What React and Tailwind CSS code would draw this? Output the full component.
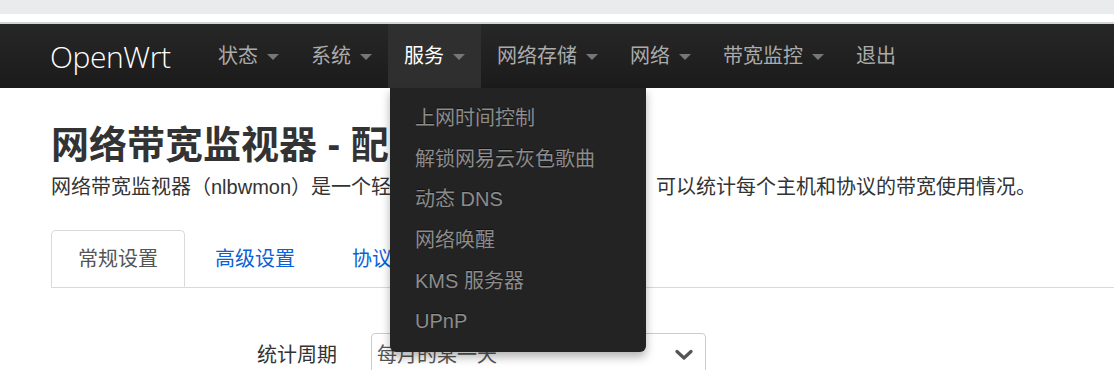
import React from "react";

const navItems = [
	{ label: "状态", caret: true },
	{ label: "系统", caret: true },
	{ label: "服务", caret: true, active: true },
	{ label: "网络存储", caret: true },
	{ label: "网络", caret: true },
	{ label: "带宽监控", caret: true },
	{ label: "退出", caret: false },
];

const serviceMenu = [
	"上网时间控制",
	"解锁网易云灰色歌曲",
	"动态 DNS",
	"网络唤醒",
	"KMS 服务器",
	"UPnP",
];

const Caret = () => (
	<span className="ml-[9px] mt-[2px] inline-block w-0 h-0 border-l-[6.5px] border-r-[6.5px] border-t-[6px] border-l-transparent border-r-transparent border-t-[#777777]" />
);

const App = () => {
	return (
		<div
			className="relative w-full h-[370px] overflow-hidden bg-white text-[#333333]"
			style={{ fontFamily: '"Liberation Sans", "Noto Sans CJK SC", sans-serif' }}
		>
			{/* browser strip */}
			<div className="h-[14px] bg-[#e9eced]" />
			<div className="h-[8px] bg-white" />
			<div className="h-[2px] bg-[#cfd5d7]" />

			{/* Navbar */}
			<nav className="relative z-10 h-[64px] flex items-stretch bg-gradient-to-b from-[#272727] to-[#1b1b1b]">
				<div className="w-[202px] pl-[50px] flex items-center">
					<span
						className="text-white text-[30px] font-light tracking-[-0.4px]"
						style={{ fontFamily: '"Open Sans", "Liberation Sans", sans-serif' }}
					>
						OpenWrt
					</span>
				</div>
				{navItems.map((item) => (
					<div
						key={item.label}
						className={`relative flex items-center pl-[16px] pr-[16px] text-[20px] ${
							item.active ? "bg-[#2f2f2f] text-white" : "text-[#ababab]"
						}`}
					>
						<span>{item.label}</span>
						{item.caret && <Caret />}
						{item.active && (
							<div className="absolute top-full left-[2px] w-[256px] pt-[10px] pb-[10px] bg-[#232323] rounded-b-[6px] shadow-[0_5px_10px_rgba(0,0,0,0.3)]">
								{serviceMenu.map((entry) => (
									<div
										key={entry}
										className="h-[40.6px] flex items-center pl-[25px] text-[20px] text-[#8c8c8c] whitespace-nowrap [text-shadow:0_-1px_0_rgba(0,0,0,0.5)]"
									>
										{entry}
									</div>
								))}
							</div>
						)}
					</div>
				))}
			</nav>

			{/* Content */}
			<div className="pl-[51px]">
				<h2 className="mt-[34px] text-[38px] leading-[46px] font-bold text-[#333333] whitespace-nowrap">
					网络带宽监视器 - 配置
				</h2>
				<p className="mt-[4px] text-[20px] leading-[30px] text-[#333333] whitespace-nowrap">
					网络带宽监视器（nlbwmon）是一个轻量级、高效的流量统计程序，
					<span className="ml-[5px]">可以统计每个主机和协议的带宽使用情况。</span>
				</p>

				{/* Tabs */}
				<div className="mt-[28px] flex gap-[3px] border-b border-[#d9d9d9]">
					<div className="h-[57px] -mb-px flex items-center px-[26px] bg-white border border-[#d9d9d9] border-b-white rounded-t-[5px] text-[20px] text-[#555555]">
						常规设置
					</div>
					<div className="h-[57px] flex items-center px-[27px] text-[20px] text-[#0a62d6]">
						高级设置
					</div>
					<div className="h-[57px] flex items-center px-[27px] text-[20px] text-[#0a62d6]">
						协议映射
					</div>
				</div>

				{/* Form row */}
				<div className="mt-[45px] flex items-center">
					<label className="w-[286px] text-right text-[20px] text-[#333333]">
						统计周期
					</label>
					<div className="ml-[34px] w-[335px] h-[44px] flex items-center justify-between pl-[5px] pr-[12px] border border-[#cccccc] rounded-[4px] text-[20px] text-[#555555]">
						<span>每月的某一天</span>
						<svg width="18" height="12" viewBox="0 0 18 12" fill="none">
							<path
								d="M2 2.5 L9 9 L16 2.5"
								stroke="#555555"
								strokeWidth="3.2"
								strokeLinecap="round"
								strokeLinejoin="round"
							/>
						</svg>
					</div>
				</div>
			</div>
		</div>
	);
};

export default App;
